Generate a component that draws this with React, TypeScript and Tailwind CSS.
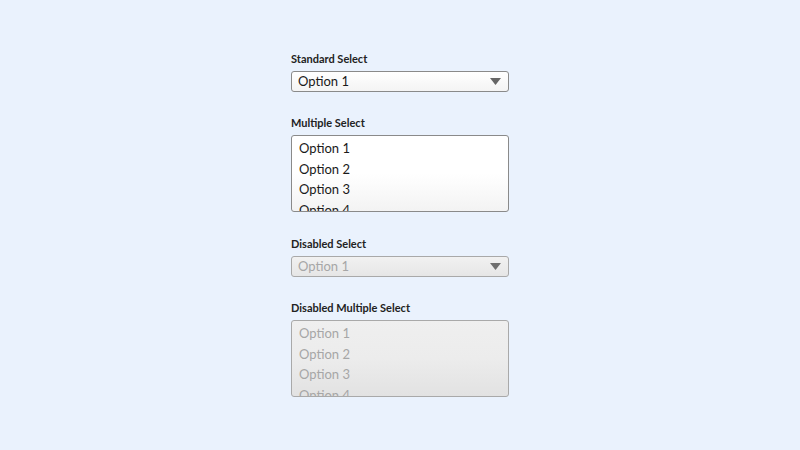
import React from "react";

const font = { fontFamily: "Lato, 'Noto Sans', sans-serif" };

function Arrow({ disabled }: { disabled?: boolean }) {
  return (
    <svg width="11" height="7" viewBox="0 0 11 7" className="shrink-0">
      <polygon points="0,0 11,0 5.5,7" fill={disabled ? "#6f6f6f" : "#666666"} />
    </svg>
  );
}

function Label({ children }: { children: React.ReactNode }) {
  return (
    <div className="h-[14px] leading-[14px] text-[11px] font-bold text-[#222] mb-[5px]">
      {children}
    </div>
  );
}

function SingleSelect({ disabled }: { disabled?: boolean }) {
  return (
    <div
      className={
        "h-[21px] w-[218px] flex items-center justify-between pl-[6px] pr-[7px] rounded-[3px] border " +
        (disabled
          ? "border-[#a9a9a9] bg-gradient-to-b from-[#f1f1f1] to-[#e6e6e6] text-[#a6a6a6]"
          : "border-[#8a8a8a] bg-gradient-to-b from-white to-[#f4f4f4] text-[#1a1a1a]")
      }
    >
      <span className="text-[13px] leading-[14px] pb-[2px]">Option 1</span>
      <Arrow disabled={disabled} />
    </div>
  );
}

function MultiSelect({ disabled }: { disabled?: boolean }) {
  return (
    <div
      className={
        "h-[77px] w-[218px] overflow-hidden pt-[2px] pl-[7px] rounded-[3px] border " +
        (disabled
          ? "border-[#a9a9a9] bg-gradient-to-b from-[#efefef] via-[#ececec] to-[#e2e2e2] text-[#a6a6a6]"
          : "border-[#8a8a8a] bg-gradient-to-b from-white via-white to-[#f3f3f3] text-[#1a1a1a]")
      }
    >
      {["Option 1", "Option 2", "Option 3", "Option 4"].map((o) => (
        <div key={o} className="h-[20.5px] leading-[20.5px] text-[13px]">
          {o}
        </div>
      ))}
    </div>
  );
}

export default function App() {
  return (
    <div className="w-[800px] h-[450px] bg-[#eaf2fd] flex justify-center" style={font}>
      <div className="w-[218px] pt-[52px] flex flex-col">
        <Label>Standard Select</Label>
        <SingleSelect />
        <div className="h-[24px]" />
        <Label>Multiple Select</Label>
        <MultiSelect />
        <div className="h-[25px]" />
        <Label>Disabled Select</Label>
        <SingleSelect disabled />
        <div className="h-[24px]" />
        <Label>Disabled Multiple Select</Label>
        <MultiSelect disabled />
      </div>
    </div>
  );
}
